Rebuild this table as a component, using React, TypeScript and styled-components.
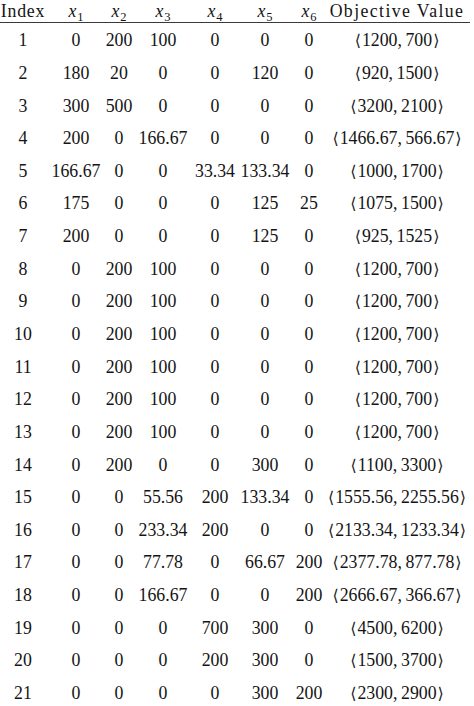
import React from "react";
import styled, { createGlobalStyle } from "styled-components";

const GlobalStyle = createGlobalStyle`
  html, body {
    margin: 0;
    padding: 0;
    background: #ffffff;
  }
  body {
    font-family: "Liberation Serif", "DejaVu Serif", serif;
    color: #141414;
  }
`;

// column widths chosen so that each column's centre lands where the reference has it
const columns = [46, 60, 26, 62, 42, 58, 30, 146];

const rows: string[][] = [
  ["1", "0", "200", "100", "0", "0", "0", "1200, 700"],
  ["2", "180", "20", "0", "0", "120", "0", "920, 1500"],
  ["3", "300", "500", "0", "0", "0", "0", "3200, 2100"],
  ["4", "200", "0", "166.67", "0", "0", "0", "1466.67, 566.67"],
  ["5", "166.67", "0", "0", "33.34", "133.34", "0", "1000, 1700"],
  ["6", "175", "0", "0", "0", "125", "25", "1075, 1500"],
  ["7", "200", "0", "0", "0", "125", "0", "925, 1525"],
  ["8", "0", "200", "100", "0", "0", "0", "1200, 700"],
  ["9", "0", "200", "100", "0", "0", "0", "1200, 700"],
  ["10", "0", "200", "100", "0", "0", "0", "1200, 700"],
  ["11", "0", "200", "100", "0", "0", "0", "1200, 700"],
  ["12", "0", "200", "100", "0", "0", "0", "1200, 700"],
  ["13", "0", "200", "100", "0", "0", "0", "1200, 700"],
  ["14", "0", "200", "0", "0", "300", "0", "1100, 3300"],
  ["15", "0", "0", "55.56", "200", "133.34", "0", "1555.56, 2255.56"],
  ["16", "0", "0", "233.34", "200", "0", "0", "2133.34, 1233.34"],
  ["17", "0", "0", "77.78", "0", "66.67", "200", "2377.78, 877.78"],
  ["18", "0", "0", "166.67", "0", "0", "200", "2666.67, 366.67"],
  ["19", "0", "0", "0", "700", "300", "0", "4500, 6200"],
  ["20", "0", "0", "0", "200", "300", "0", "1500, 3700"],
  ["21", "0", "0", "0", "0", "300", "200", "2300, 2900"],
];

const Table = styled.div`
  display: grid;
  grid-template-columns: ${columns.map((w) => `${w}px`).join(" ")};
  grid-template-rows: 22px 1.3px;
  grid-auto-rows: 32.65px;
  width: 474px;
  font-size: 17.8px;
  line-height: 1;
`;

const HeaderCell = styled.div<{ $wide?: boolean }>`
  align-self: center;
  justify-self: center;
  white-space: nowrap;
  letter-spacing: ${(p) => (p.$wide ? "1.4px" : "0.8px")};
  margin-top: 1px;
`;

const Rule = styled.div`
  grid-column: 1 / -1;
  background: #3a3a3a;
`;

const Cell = styled.div`
  align-self: center;
  justify-self: center;
  white-space: nowrap;
  padding-top: 3px;
`;

const Var = styled.span`
  font-style: italic;
  letter-spacing: 0;
`;

const Sub = styled.sub`
  font-style: normal;
  font-size: 12.5px;
  line-height: 0;
  vertical-align: -4px;
  margin-left: 1px;
  letter-spacing: 0;
`;

const Bracket = styled.span`
  font-family: "DejaVu Serif", serif;
  font-size: 16px;
  color: #222;
  margin: 0 1px;
`;

const Objective = ({ value }: { value: string }) => {
  const [a, b] = value.split(", ");
  return (
    <>
      <Bracket>⟨</Bracket>
      {a},{"\u2009"}
      {b}
      <Bracket>⟩</Bracket>
    </>
  );
};

export default function App() {
  return (
    <>
      <GlobalStyle />
      <Table>
        <HeaderCell>Index</HeaderCell>
        {[1, 2, 3, 4, 5, 6].map((i) => (
          <HeaderCell key={i}>
            <Var>x</Var>
            <Sub>{i}</Sub>
          </HeaderCell>
        ))}
        <HeaderCell $wide>Objective Value</HeaderCell>
        <Rule />
        {rows.map((row) =>
          row.map((value, c) => (
            <Cell key={`${row[0]}-${c}`}>
              {c === 7 ? <Objective value={value} /> : value}
            </Cell>
          ))
        )}
      </Table>
    </>
  );
}
